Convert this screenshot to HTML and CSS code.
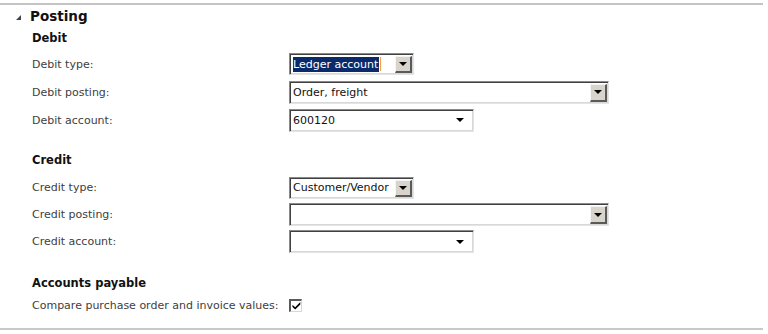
FILE: index.html
```html
<!DOCTYPE html>
<html>
<head>
<meta charset="utf-8">
<link rel="stylesheet" href="styles.css">
</head>
<body>
<div class="panel">
  <div class="group-title"><span class="twisty"></span>Posting</div>

  <div class="section debit">
    <div class="section-title">Debit</div>
    <div class="row">
      <label>Debit type:</label>
      <div class="combo small"><span class="val"><span class="sel">Ledger account</span><span class="caret"></span></span><span class="btn"><span class="arrow"></span></span></div>
    </div>
    <div class="row">
      <label>Debit posting:</label>
      <div class="combo wide"><span class="val">Order, freight</span><span class="btn"><span class="arrow"></span></span></div>
    </div>
    <div class="row">
      <label>Debit account:</label>
      <div class="combo medium lookup"><span class="val">600120</span><span class="lk"><span class="arrow"></span></span></div>
    </div>
  </div>

  <div class="section credit">
    <div class="section-title">Credit</div>
    <div class="row">
      <label>Credit type:</label>
      <div class="combo small"><span class="val">Customer/Vendor</span><span class="btn"><span class="arrow"></span></span></div>
    </div>
    <div class="row">
      <label>Credit posting:</label>
      <div class="combo wide"><span class="val"></span><span class="btn"><span class="arrow"></span></span></div>
    </div>
    <div class="row">
      <label>Credit account:</label>
      <div class="combo medium lookup"><span class="val"></span><span class="lk"><span class="arrow"></span></span></div>
    </div>
  </div>

  <div class="section payable">
    <div class="section-title">Accounts payable</div>
    <div class="row">
      <label>Compare purchase order and invoice values:</label>
      <span class="checkbox"><svg width="9" height="9" viewBox="0 0 9 9"><path d="M0.5 3.8 L3.2 6.3 L8.3 1 L8.3 3.4 L3.2 8.6 L0.5 6 Z" fill="#000"/></svg></span>
    </div>
  </div>
</div>
</body>
</html>
```

FILE: styles.css
```css
html, body {
  margin: 0;
  padding: 0;
  background: #ffffff;
}

body {
  font-family: "DejaVu Sans", Verdana, sans-serif;
  font-size: 11px;
  color: #404040;
}

.panel {
  width: 763px;
  margin-top: 3px;
  border-top: 2px solid #c4c4c4;
  border-bottom: 2px solid #c8c8c8;
  padding-bottom: 11px;
}

.group-title {
  display: flex;
  align-items: center;
  height: 21px;
  padding-left: 16px;
  font-weight: bold;
  font-size: 13.5px;
  color: #111;
}

.twisty {
  width: 0;
  height: 0;
  border-left: 5px solid transparent;
  border-bottom: 5px solid #444;
  margin-right: 9px;
  margin-top: 3px;
}

.section {
  padding-left: 32px;
}

.section-title {
  font-weight: bold;
  font-size: 11.5px;
  color: #111;
  height: 20px;
  line-height: 20px;
}

.debit .section-title {
  margin-top: 2px;
  margin-bottom: 2px;
}

.credit {
  margin-top: 16px;
}

.credit .section-title {
  margin-bottom: 4px;
}

.payable {
  margin-top: 18px;
}

.row {
  display: grid;
  grid-template-columns: 257px auto;
  align-items: center;
  justify-content: start;
  height: 27px;
}

.debit .row {
  height: 28px;
}

.payable .row {
  height: 24px;
}

.combo {
  display: flex;
  box-sizing: border-box;
  height: 23px;
  border-top: 1px solid #8a8a8a;
  border-left: 1px solid #8a8a8a;
  border-right: 1px solid #e4e4e4;
  border-bottom: 1px solid #e4e4e4;
  box-shadow: inset 1px 1px 0 #404040, inset -1px -1px 0 #d8d8d8;
  background: #fff;
  color: #111;
}

.combo.small { width: 125px; height: 22px; }
.combo.wide { width: 320px; }
.combo.medium { width: 185px; }

.val {
  flex: 1;
  display: flex;
  align-items: center;
  padding-left: 3px;
  white-space: nowrap;
  overflow: hidden;
}

.sel {
  background: #0b2a6b;
  color: #fff;
  padding: 1px 1px 1px 0;
}

.caret {
  width: 1px;
  height: 14px;
  background: #f0a040;
  margin-left: 1px;
}

.btn {
  width: 17px;
  flex: none;
  margin: 2px 1px 1px 0;
  box-sizing: border-box;
  background: #d8d4cc;
  border-top: 1px solid #f4f4f4;
  border-left: 1px solid #f4f4f4;
  border-right: 2px solid #5a5a5a;
  border-bottom: 2px solid #5a5a5a;
  display: flex;
  align-items: center;
  justify-content: center;
}

.lk {
  width: 26px;
  flex: none;
  display: flex;
  align-items: center;
  justify-content: center;
}

.arrow {
  width: 0;
  height: 0;
  border-left: 4px solid transparent;
  border-right: 4px solid transparent;
  border-top: 4px solid #000;
}

.checkbox {
  display: flex;
  align-items: center;
  justify-content: center;
  width: 13px;
  height: 13px;
  box-sizing: border-box;
  border-top: 2px solid #5a5a5a;
  border-left: 2px solid #5a5a5a;
  border-right: 1px solid #d8d8d8;
  border-bottom: 1px solid #d8d8d8;
  background: #fff;
}
```
